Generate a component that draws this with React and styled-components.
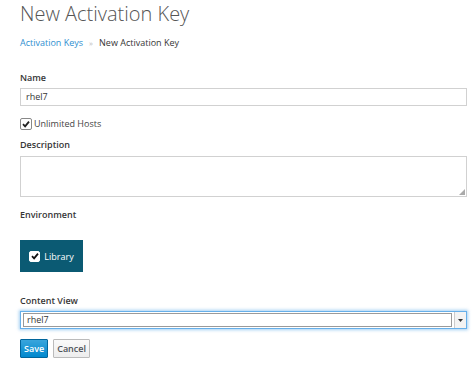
import React from 'react'
import styled, { createGlobalStyle } from 'styled-components'

const GlobalStyle = createGlobalStyle`
  body {
    margin: 0;
    background: #fff;
    font-family: "Open Sans", "Liberation Sans", sans-serif;
    color: #363636;
  }
`

const Page = styled.div`
  padding: 0 7px 0 20px;
  width: 474px;
  box-sizing: border-box;
`

const Title = styled.h1`
  margin: 0;
  font-size: 20px;
  font-weight: 300;
  color: #555;
  line-height: 28px;
`

const Crumbs = styled.div`
  display: flex;
  align-items: center;
  gap: 6px;
  margin-top: 8px;
  font-size: 9px;
  line-height: 14px;
`

const CrumbLink = styled.a`
  color: #2f8fd0;
  text-decoration: none;
`

const CrumbSep = styled.span`
  color: #bbb;
  font-size: 8px;
`

const Form = styled.form`
  display: flex;
  flex-direction: column;
  margin-top: 21px;
`

const Label = styled.label`
  font-size: 9px;
  font-weight: 600;
  color: #363636;
  line-height: 14px;
  margin-top: ${(p) => p.$gap || 0}px;
`

const TextInput = styled.div`
  margin-top: 3px;
  height: 18px;
  border: 1px solid #d1d1d1;
  box-sizing: border-box;
  padding: 0 5px;
  font-size: 9px;
  line-height: 16px;
  color: #363636;
`

const CheckRow = styled.div`
  display: flex;
  align-items: center;
  gap: 2px;
  margin-top: 11px;
  font-size: 9px;
  color: #444;
  line-height: 14px;
`

const Box = styled.span`
  width: ${(p) => (p.$light ? 11 : 12)}px;
  height: ${(p) => (p.$light ? 11 : 12)}px;
  border: 1px solid ${(p) => (p.$light ? '#fff' : '#888')};
  background: #fff;
  border-radius: 2px;
  box-sizing: border-box;
  display: inline-flex;
  align-items: center;
  justify-content: center;
`

const TextArea = styled.div`
  position: relative;
  margin-top: 4px;
  height: 41px;
  border: 1px solid #d1d1d1;
  box-sizing: border-box;
`

const Grip = styled.svg`
  position: absolute;
  right: 1px;
  bottom: 1px;
`

const EnvTile = styled.div`
  margin-top: 18px;
  width: 63px;
  height: 32px;
  background: #0b5a73;
  display: flex;
  align-items: center;
  justify-content: center;
  gap: 4px;
  color: #fff;
  font-size: 9px;
`

const SelectWrap = styled.div`
  margin-top: 3px;
  height: 18px;
  display: flex;
  border: 1px solid #66afe9;
  box-shadow: 0 0 3px 1px rgba(102, 175, 233, 0.6);
  box-sizing: border-box;
  background: #fff;
`

const SelectField = styled.div`
  flex: 1;
  margin: 1px 2px;
  border: 1px solid #9a9a9a;
  padding: 0 3px;
  font-size: 9px;
  line-height: 12px;
  color: #363636;
`

const SelectArrow = styled.div`
  width: 11px;
  display: flex;
  align-items: center;
  justify-content: center;
  background: #f3f3f3;
  border-left: 1px solid #ccc;
`

const Buttons = styled.div`
  display: flex;
  gap: 5px;
  margin-top: 10px;
`

const Button = styled.button`
  height: 19px;
  padding: 0 3px;
  font-family: inherit;
  font-size: 9px;
  font-weight: 600;
  border-radius: 1px;
  border: 1px solid ${(p) => (p.$primary ? '#00659c' : '#bbb')};
  background: ${(p) =>
    p.$primary ? 'linear-gradient(#39a5dc, #0088ce)' : 'linear-gradient(#fafafa, #ededed)'};
  color: ${(p) => (p.$primary ? '#fff' : '#4d5258')};
`

const Tick = ({ color = '#222' }) => (
  <svg width="8" height="8" viewBox="0 0 8 8">
    <path d="M1 4.2 L3.1 6.3 L7 1.6" fill="none" stroke={color} strokeWidth="1.8" />
  </svg>
)

const App = () => (
  <>
    <GlobalStyle />
    <Page>
      <Title>New Activation Key</Title>
      <Crumbs>
        <CrumbLink href="#">Activation Keys</CrumbLink>
        <CrumbSep>»</CrumbSep>
        <span>New Activation Key</span>
      </Crumbs>
      <Form>
        <Label>Name</Label>
        <TextInput>rhel7</TextInput>
        <CheckRow>
          <Box><Tick /></Box>
          Unlimited Hosts
        </CheckRow>
        <Label $gap={7}>Description</Label>
        <TextArea>
          <Grip width="6" height="6" viewBox="0 0 6 6">
            <path d="M6 0 L6 6 L0 6 Z" fill="#aaa" />
          </Grip>
        </TextArea>
        <Label $gap={11}>Environment</Label>
        <EnvTile>
          <Box $light><Tick color="#111" /></Box>
          Library
        </EnvTile>
        <Label $gap={22}>Content View</Label>
        <SelectWrap>
          <SelectField>rhel7</SelectField>
          <SelectArrow>
            <svg width="5" height="3" viewBox="0 0 5 3">
              <path d="M0 0 L5 0 L2.5 3 Z" fill="#333" />
            </svg>
          </SelectArrow>
        </SelectWrap>
        <Buttons>
          <Button type="button" $primary>Save</Button>
          <Button type="button">Cancel</Button>
        </Buttons>
      </Form>
    </Page>
  </>
)

export default App
